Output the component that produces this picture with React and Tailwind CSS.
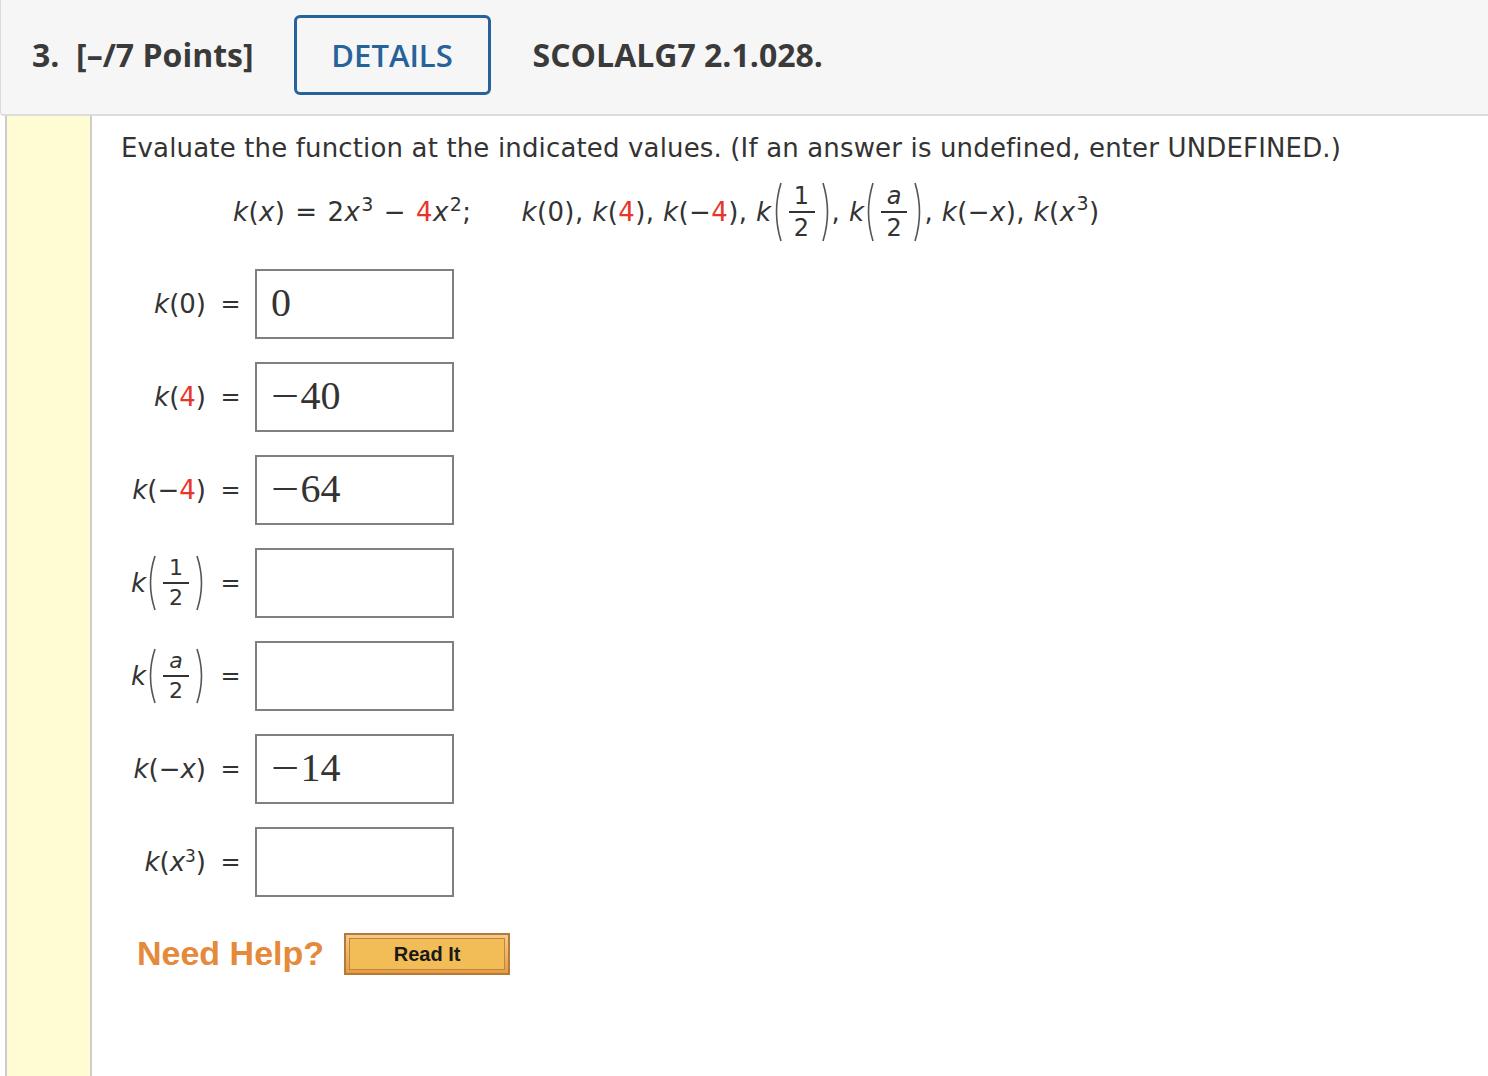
import React from 'react';

const mathFont = { fontFamily: '"DejaVu Sans", Verdana, sans-serif' };
const MINUS = '\u2212';

function Paren({ side = 'left', h = 60 }) {
  const d = side === 'left' ? `M9 2 Q 0 ${h / 2} 9 ${h - 2}` : `M3 2 Q 12 ${h / 2} 3 ${h - 2}`;
  return (
    <svg width="12" height={h} viewBox={`0 0 12 ${h}`} className="inline-block shrink-0">
      <path d={d} fill="none" stroke="#555" strokeWidth="1.6" />
    </svg>
  );
}

function Frac({ top, bottom, italicTop, size = 'text-[24px]', bar = 'w-[26px]' }) {
  return (
    <span className="inline-flex flex-col items-center px-[5px] leading-none">
      <span className={`pb-[3px] ${size} ${italicTop ? 'italic' : ''}`}>{top}</span>
      <span className={`h-[2px] ${bar} bg-[#333]`} />
      <span className={`pt-[3px] ${size}`}>{bottom}</span>
    </span>
  );
}

function KFrac({ top, italicTop, h = 60, size, bar }) {
  return (
    <span className="inline-flex items-center">
      <i>k</i>
      <Paren side="left" h={h} />
      <Frac top={top} bottom="2" italicTop={italicTop} size={size} bar={bar} />
      <Paren side="right" h={h} />
    </span>
  );
}

const Red = ({ children }) => <span className="text-[#e8352a]">{children}</span>;
const Sup = ({ children }) => <sup className="ml-[1px] text-[19px]">{children}</sup>;

function Row({ label, value }) {
  return (
    <div className="flex h-[70px] items-center">
      <div className="flex w-[85px] justify-end text-[26px] text-[#333]" style={mathFont}>
        {label}
      </div>
      <div className="w-[49px] text-center text-[24px] text-[#333]" style={mathFont}>=</div>
      <div
        className="flex h-[70px] w-[199px] items-center border-2 border-[#808080] bg-white pb-[3px] pl-[14px] text-[40px] text-[#333]"
        style={{ fontFamily: '"Liberation Serif", "Times New Roman", serif' }}
      >
        {value}
      </div>
    </div>
  );
}

const Neg = ({ n }) => (
  <span className="flex items-center">
    <span className="mr-[7px] inline-block origin-left scale-x-[1.25]">{MINUS}</span>
    {n}
  </span>
);

export default function App() {
  const rows = [
    { label: <span><i>k</i>(0)</span>, value: '0' },
    { label: <span><i>k</i>(<Red>4</Red>)</span>, value: <Neg n="40" /> },
    { label: <span><i>k</i>({MINUS}<Red>4</Red>)</span>, value: <Neg n="64" /> },
    { label: <KFrac top="1" h={58} size="text-[22px]" bar="w-[26px]" />, value: '' },
    { label: <KFrac top="a" italicTop h={58} size="text-[22px]" bar="w-[26px]" />, value: '' },
    { label: <span><i>k</i>({MINUS}<i>x</i>)</span>, value: <Neg n="14" /> },
    { label: <span><i>k</i>(<i>x</i><sup className="text-[17px]">3</sup>)</span>, value: '' },
  ];

  return (
    <div className="min-h-screen bg-white">
      <header
        className="flex h-[116px] items-center rounded-bl-[4px] border-b-2 border-l border-[#dcdcdc] bg-[#f6f6f6] pb-[4px] pl-[31px] text-[32px] font-bold text-[#3a3a3a]"
        style={{ fontFamily: '"Open Sans", sans-serif' }}
      >
        <span className="whitespace-pre">3.  [–/7 Points]</span>
        <span className="ml-[40px] flex h-[80px] w-[197px] items-center justify-center rounded-[6px] border-[3px] border-[#27629a] text-[31px] font-semibold text-[#27629a]">
          DETAILS
        </span>
        <span className="ml-[42px]">SCOLALG7 2.1.028.</span>
      </header>

      <div className="flex min-h-[960px]">
        <div className="ml-[5px] w-[87px] shrink-0 border-x-2 border-[#cccccc] bg-[#fffcd4]" />
        <div className="flex-1 pl-[29px] text-[#333]" style={mathFont}>
          <p className="pt-[14px] text-[26px] leading-[36px] tracking-[0.15px]">
            Evaluate the function at the indicated values. (If an answer is undefined, enter UNDEFINED.)
          </p>
          <div className="mt-[14px] flex h-[64px] items-center pl-[112px] text-[26px] tracking-[0.4px]">
            <span className="whitespace-nowrap">
              <i>k</i>(<i>x</i>)<span className="mx-[10px]">=</span>2<i>x</i><Sup>3</Sup>
              <span className="mx-[10px]">{MINUS}</span><Red>4</Red><i>x</i><Sup>2</Sup>;
            </span>
            <span className="ml-[50px] inline-flex items-center whitespace-nowrap">
              <i>k</i>(0),&nbsp;<i>k</i>(<Red>4</Red>),&nbsp;<i>k</i>({MINUS}<Red>4</Red>),&nbsp;
              <KFrac top="1" h={62} />,&nbsp;
              <KFrac top="a" italicTop h={62} />,&nbsp;<i>k</i>({MINUS}<i>x</i>),&nbsp;<i>k</i>(<i>x</i>
              <Sup>3</Sup>)
            </span>
          </div>

          <div className="mt-[25px] flex flex-col gap-[23px]">
            {rows.map((r, i) => (
              <Row key={i} label={r.label} value={r.value} />
            ))}
          </div>

          <div className="mt-[31px] flex items-center pl-[16px]">
            <span
              className="text-[34px] font-bold text-[#e5893a]"
              style={{ fontFamily: '"Liberation Sans", Arial, sans-serif' }}
            >
              Need Help?
            </span>
            <button
              type="button"
              className="ml-[20px] flex h-[42px] w-[166px] items-center justify-center border-2 border-[#b27b3c] bg-gradient-to-b from-[#f8c98a] to-[#eb9a40] p-[3px]"
            >
              <span
                className="flex h-full w-full items-center justify-center border border-[#b88a40] bg-[#f2bc57] text-[20px] font-bold text-[#1a1a1a]"
                style={{ fontFamily: '"Liberation Sans", Arial, sans-serif' }}
              >
                Read It
              </span>
            </button>
          </div>
        </div>
      </div>
    </div>
  );
}
